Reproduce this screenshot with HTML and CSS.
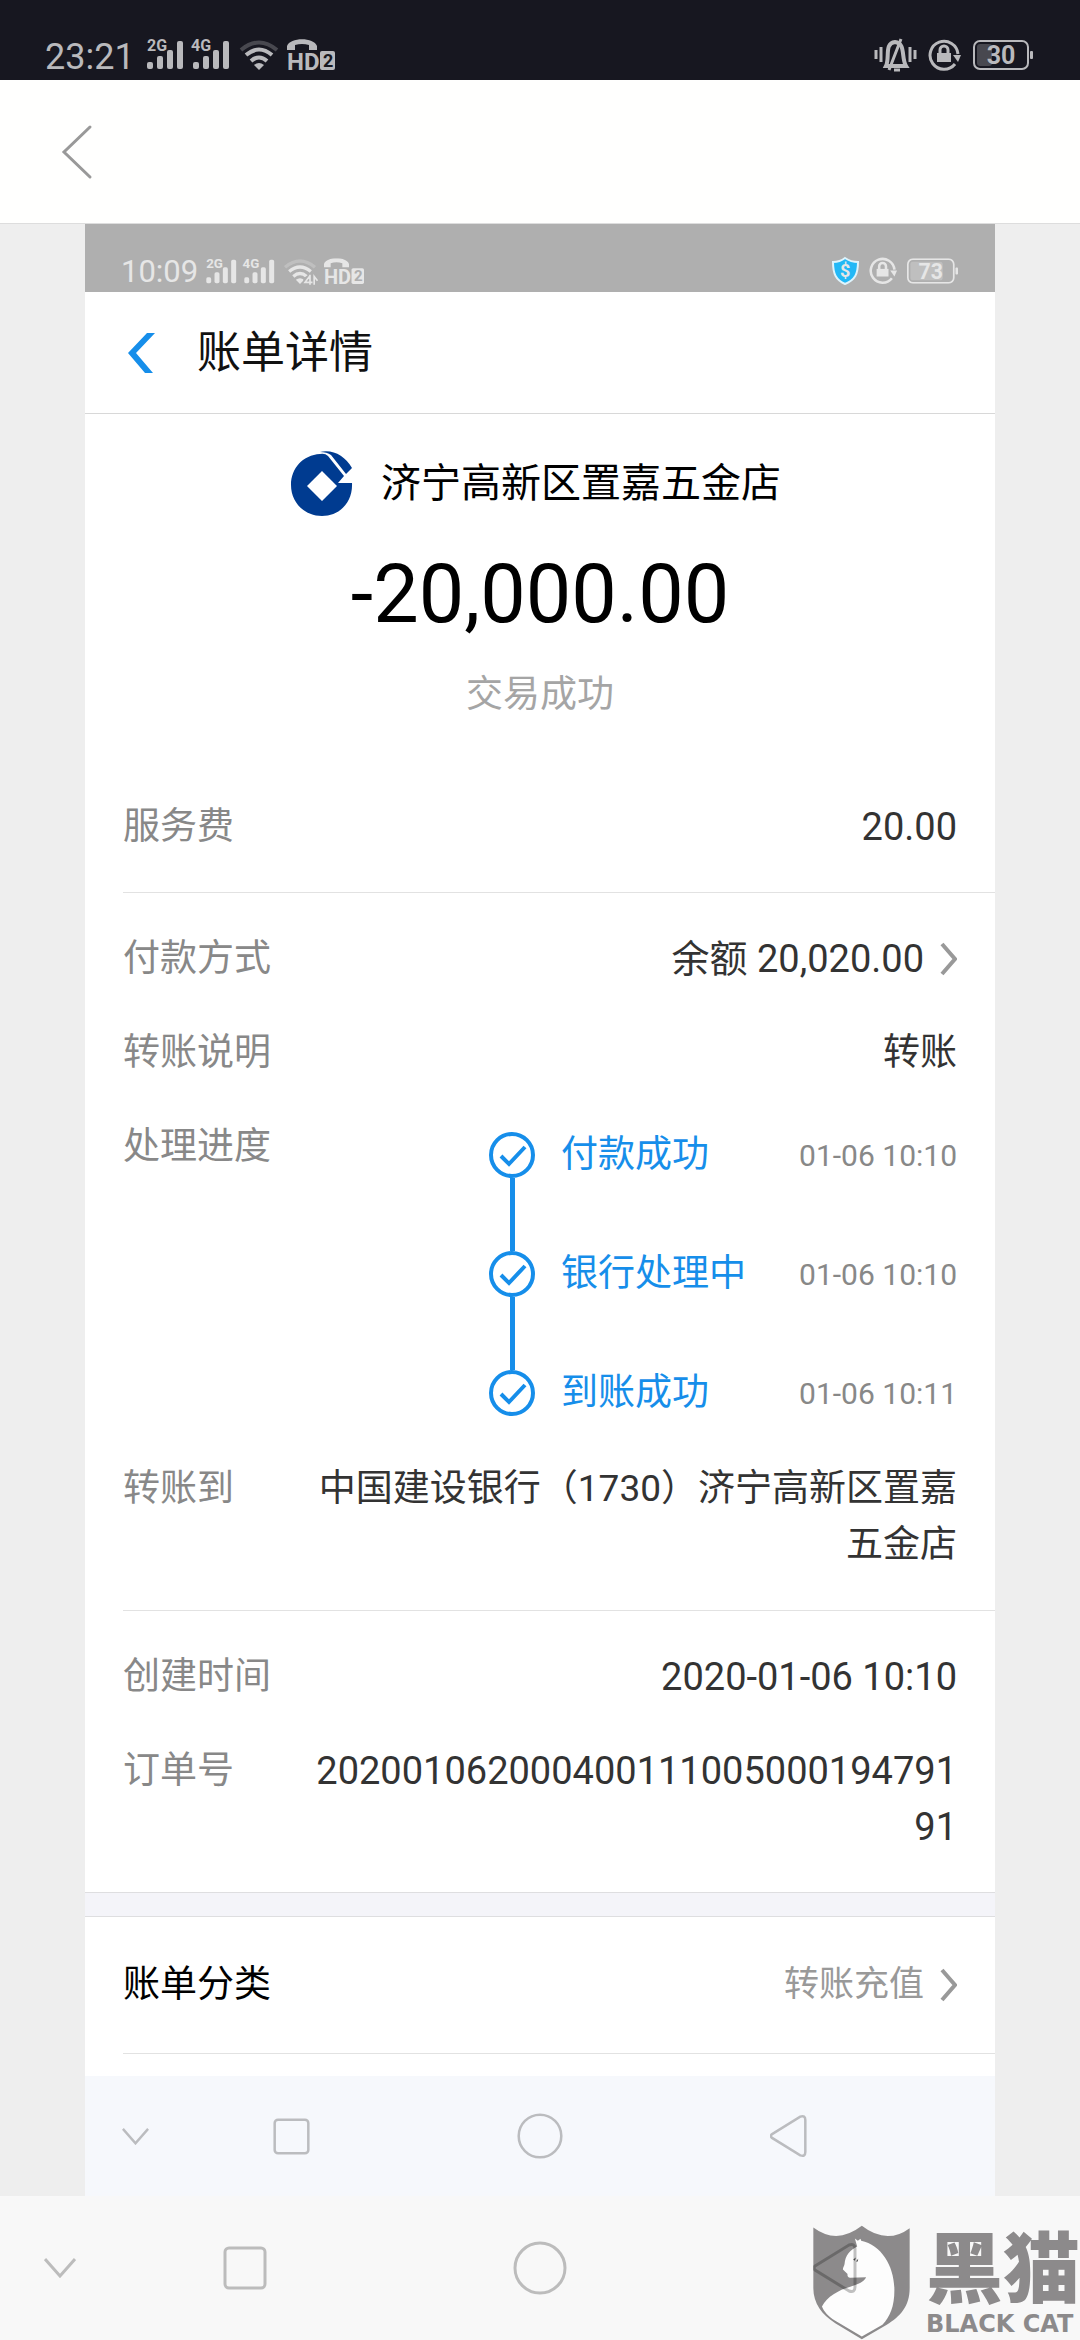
FILE: index.html
```html
<!DOCTYPE html>
<html lang="zh-CN">
<head>
    <meta charset="utf-8">
    <meta name="viewport" content="width=device-width">
    <title>账单详情</title>
    <link rel="stylesheet" href="styles.css">
</head>

<body>

    <!-- 公用图标 -->
    <svg class="sprite" aria-hidden="true">
        <symbol id="bars" viewBox="0 0 38 30">
            <rect x="0" y="22" width="6" height="7" rx="2"/>
            <rect x="10" y="16" width="6" height="13" rx="2"/>
            <rect x="20" y="10" width="6" height="19" rx="2"/>
            <rect x="30" y="1" width="6" height="28" rx="2"/>
        </symbol>
        <symbol id="wifi" viewBox="0 0 40 30">
            <g fill="none" stroke="currentColor" stroke-width="4">
                <path d="M2 10Q20 -5 38 10" opacity=".3"/>
                <path d="M7 15Q20 4 33 15"/>
                <path d="M12 21Q20 14 28 21"/>
            </g>
            <path d="M15 25Q20 21 25 25L20 30Z"/>
        </symbol>
        <symbol id="hd" viewBox="0 0 48 32">
            <path d="M0 11V7C3 -2 27 -2 30 7V11H22V6Q15 4 8 6V11Z"/>
            <rect x="33" y="12" width="15" height="19" rx="2"/>
        </symbol>
        <symbol id="lock" viewBox="0 0 33 33">
            <g fill="none" stroke="currentColor">
                <path stroke-width="3" d="M30 15A14 14 0 1 0 27 25"/>
                <path stroke-width="3" d="M12 15V11a4 4 0 0 1 8 0v4"/>
            </g>
            <rect x="9" y="14" width="14" height="9"/>
            <path d="M25 16H33L30 23Z"/>
        </symbol>
        <symbol id="battery" viewBox="0 0 60 30">
            <rect x="1" y="1" width="54" height="28" rx="6" fill="none" stroke="currentColor" stroke-width="2"/>
            <rect x="57" y="11" width="3" height="8" rx="1"/>
        </symbol>
        <symbol id="more" viewBox="0 0 17 34">
            <path d="M2 2L15 17L2 32" fill="none" stroke="currentColor" stroke-width="4"/>
        </symbol>
        <symbol id="check" viewBox="0 0 46 46">
            <g fill="none" stroke="currentColor" stroke-width="4">
                <circle cx="23" cy="23" r="21"/>
                <path d="M12 24L20 32L36 15"/>
            </g>
        </symbol>
        <symbol id="nav-down" viewBox="0 0 32 20">
            <path d="M1 1L16 18L31 1" fill="none" stroke="currentColor" stroke-width="3"/>
        </symbol>
        <symbol id="nav-square" viewBox="0 0 44 44">
            <rect x="2" y="2" width="40" height="40" rx="4" fill="none" stroke="currentColor" stroke-width="3"/>
        </symbol>
        <symbol id="nav-circle" viewBox="0 0 54 54">
            <circle cx="27" cy="27" r="25" fill="none" stroke="currentColor" stroke-width="3"/>
        </symbol>
        <symbol id="nav-back" viewBox="0 0 44 52">
            <path d="M2 24L36 3Q42 1 42 7V45Q42 51 36 49L2 28Q0 26 2 24Z" fill="none" stroke="currentColor" stroke-width="3"/>
        </symbol>
    </svg>

    <div class="status-bar">
        <span class="clock">23:21</span>
        <svg class="signal" viewBox="0 0 38 30"><use href="#bars"/><text class="net" x="0" y="11">2G</text></svg>
        <svg class="signal" viewBox="0 0 38 30"><use href="#bars"/><text class="net" x="-2" y="11">4G</text></svg>
        <svg class="wifi"><use href="#wifi"/></svg>
        <svg class="hd" viewBox="0 0 48 32"><use href="#hd"/><text class="hd-text" x="0" y="31">HD</text><text class="hd-num dark" x="36" y="28">2</text></svg>
        <span class="spacer"></span>
        <svg class="bell" viewBox="0 0 41 34">
            <path d="M11 28C15 20 9 5 20 4C31 5 26 20 31 28Z" fill="none" stroke="currentColor" stroke-width="4"/>
            <path d="M26 1L14 32M19 32h6M1 12v9M6 9v15M35 9v15M40 12v9" fill="none" stroke="currentColor" stroke-width="3"/>
        </svg>
        <svg class="lock"><use href="#lock"/></svg>
        <svg class="battery" viewBox="0 0 60 30"><rect class="charge" x="4" y="4" width="15" height="22" rx="3"/><use href="#battery"/><text class="battery-text" x="28" y="24">30</text></svg>
    </div>

    <header class="viewer-bar">
        <button class="viewer-back" aria-label="返回">
            <svg viewBox="0 0 30 54"><path d="M28 2L2 27L28 52" fill="none" stroke="currentColor" stroke-width="3" stroke-linecap="round"/></svg>
        </button>
    </header>

    <main class="bill">
        <div class="status-bar small">
            <span class="clock">10:09</span>
            <svg class="signal" viewBox="0 0 38 30"><use href="#bars"/><text class="net" x="0" y="11">2G</text></svg>
            <svg class="signal" viewBox="0 0 38 30"><use href="#bars"/><text class="net" x="-2" y="11">4G</text></svg>
            <svg class="wifi" viewBox="0 0 40 30"><use href="#wifi"/><path class="wifi-gap" d="M24 30V23L33 17H40V30Z"/><path d="M32 19V31M32 20L26 28H35M37 31V21L41 26" fill="none" stroke="currentColor" stroke-width="2"/></svg>
            <svg class="hd" viewBox="0 0 48 32"><use href="#hd"/><text class="hd-text" x="0" y="31">HD</text><text class="hd-num" x="36" y="28">2</text></svg>
            <span class="spacer"></span>
            <svg class="shield" viewBox="0 0 27 28">
                <path d="M13 1Q19 5 26 5C26 17 23 23 13 27C4 23 1 17 1 5Q8 5 13 1Z" fill="#22b8f6" stroke="#dff4fc" stroke-width="2"/>
                <text x="8" y="20">$</text>
            </svg>
            <svg class="lock"><use href="#lock"/></svg>
            <svg class="battery" viewBox="0 0 60 30"><rect class="charge" x="4" y="4" width="38" height="22" rx="3"/><use href="#battery"/><text class="battery-text" x="28" y="24">73</text></svg>
        </div>

        <div class="title-bar">
            <button class="title-back" aria-label="返回">
                <svg viewBox="0 0 27 40"><path d="M19 0H27L8 20L25 40H17L0 20Z" fill="currentColor"/></svg>
            </button>
            <h1>账单详情</h1>
        </div>

        <section class="summary">
            <div class="merchant">
                <svg class="bank-logo" viewBox="0 0 62 65">
                    <path d="M29 3Q34 2 37 5L53 25L47 32H61C62 52 48 65 31 65C13 65 0 51 0 34C0 17 12 4 29 3ZM31 20L16 35L31 50L46 35Z" fill="#003b90" fill-rule="evenodd"/>
                    <path d="M29 1C42 -2 54 5 61 17L55 23L40 4Q36 1 29 1Z" fill="#003b90"/>
                </svg>
                <span>济宁高新区置嘉五金店</span>
            </div>
            <div class="amount">-20,000.00</div>
            <div class="state">交易成功</div>
        </section>

        <dl class="group fee">
            <div class="row"><dt>服务费</dt><dd class="number">20.00</dd></div>
        </dl>

        <dl class="group">
            <div class="row">
                <dt>付款方式</dt>
                <dd class="number"><button class="link">余额 20,020.00<svg class="more"><use href="#more"/></svg></button></dd>
            </div>
            <div class="row"><dt>转账说明</dt><dd>转账</dd></div>
            <div class="row">
                <dt>处理进度</dt>
                <dd>
                    <ol class="steps">
                        <li>
                            <div class="mark"><svg><use href="#check"/></svg><i></i></div>
                            <span>付款成功</span><time>01-06 10:10</time>
                        </li>
                        <li>
                            <div class="mark"><svg><use href="#check"/></svg><i></i></div>
                            <span>银行处理中</span><time>01-06 10:10</time>
                        </li>
                        <li>
                            <div class="mark"><svg><use href="#check"/></svg></div>
                            <span>到账成功</span><time>01-06 10:11</time>
                        </li>
                    </ol>
                </dd>
            </div>
            <div class="row"><dt>转账到</dt><dd>中国建设银行（1730）济宁高新区置嘉五金店</dd></div>
        </dl>

        <dl class="group last">
            <div class="row"><dt>创建时间</dt><dd class="number">2020-01-06 10:10</dd></div>
            <div class="row"><dt>订单号</dt><dd class="number">20200106200040011100500019479191</dd></div>
        </dl>

        <div class="band"></div>

        <div class="category">
            <span>账单分类</span>
            <button class="link">转账充值<svg class="more"><use href="#more"/></svg></button>
        </div>

        <nav class="nav-bar small">
            <button class="down" aria-label="收起"><svg viewBox="0 0 32 20"><use href="#nav-down"/></svg></button>
            <button class="square" aria-label="最近任务"><svg viewBox="0 0 44 44"><use href="#nav-square"/></svg></button>
            <button class="circle" aria-label="主页"><svg viewBox="0 0 54 54"><use href="#nav-circle"/></svg></button>
            <button class="back" aria-label="返回"><svg viewBox="0 0 44 52"><use href="#nav-back"/></svg></button>
        </nav>
    </main>

    <footer class="bottom">
        <div class="watermark">
            <svg viewBox="93 105 292 345">
                <path d="M94 112Q165 165 240 107Q315 165 384 114V295C384 350 355 380 315 405L240 448L160 400C120 375 94 340 94 295Z" fill="#8c8a8b"/>
                <path d="M219 145L228 152L236 146L238 152C300 165 338 230 338 300C338 350 325 380 302 405L240 440L160 393C140 380 125 365 120 350C135 320 170 300 205 290C230 283 247 275 253 262L205 263C198 262 196 258 197 252L183 238C183 232 187 228 188 222C190 195 205 180 226 169Z" fill="#fdfdfd"/>
                <path d="M214 208L222 202L219 212ZM222 214L229 206L228 214Z" fill="#555"/>
            </svg>
            <div class="brand">
                <b>黑猫</b>
                <span>BLACK CAT</span>
            </div>
        </div>
        <nav class="nav-bar">
            <button class="down" aria-label="收起"><svg viewBox="0 0 32 20"><use href="#nav-down"/></svg></button>
            <button class="square" aria-label="最近任务"><svg viewBox="0 0 44 44"><use href="#nav-square"/></svg></button>
            <button class="circle" aria-label="主页"><svg viewBox="0 0 54 54"><use href="#nav-circle"/></svg></button>
            <button class="back" aria-label="返回"><svg viewBox="0 0 44 52"><use href="#nav-back"/></svg></button>
        </nav>
    </footer>

</body>
</html>
```
FILE: styles.css
```css
* {
    box-sizing: border-box;
}

body {
    margin: 0;
    min-height: 100vh;
    display: flex;
    flex-direction: column;
    background-color: #eee;
    color: #333;
    font-family: Roboto, "Noto Sans CJK SC", sans-serif;
    font-size: 37px;
    line-height: 56px;
}

button {
    padding: 0;
    border: none;
    background: none;
    color: inherit;
    font: inherit;
    cursor: pointer;
}

svg {
    display: block;
    fill: currentColor;
    overflow: visible;
}

.sprite {
    position: absolute;
    width: 0;
    height: 0;
}

/* 状态栏 */
.status-bar {
    display: flex;
    align-items: center;
    gap: 8px;
    height: 80px;
    padding: 30px 47px 0 45px;
    background-color: #171720;
    color: #b9b9bc;
}

.clock {
    margin-right: 4px;
    padding-top: 4px;
    font-size: 36px;
    line-height: 46px;
}

.signal {
    width: 38px;
    height: 30px;
}

.net {
    font-size: 16px;
    font-weight: bold;
}

.wifi {
    width: 40px;
    height: 30px;
}

.hd {
    width: 48px;
    height: 32px;
}

.hd-text {
    font-size: 24px;
    font-weight: bold;
}

.hd-num {
    fill: #afafaf;
    font-size: 18px;
    font-weight: bold;
}

.hd-num.dark {
    fill: #171720;
}

.spacer {
    flex: 1;
}

.bell {
    width: 41px;
    height: 34px;
    margin-right: 4px;
}

.lock {
    width: 33px;
    height: 33px;
    margin-right: 4px;
}

.battery {
    width: 60px;
    height: 30px;
}

.charge {
    opacity: 0.3;
}

.battery-text {
    font-size: 25px;
    font-weight: bold;
    text-anchor: middle;
}

.status-bar.small {
    gap: 6px;
    height: 68px;
    padding: 26px 37px 0 36px;
    background-color: #afafaf;
    color: #e6e6e6;
}

.small .clock {
    margin-right: 2px;
    padding-top: 2px;
    font-size: 31px;
    line-height: 40px;
}

.small .signal {
    width: 32px;
    height: 25px;
}

.small .wifi {
    width: 36px;
    height: 25px;
}

.small .hd {
    width: 40px;
    height: 27px;
}

.wifi-gap {
    fill: #afafaf;
}

.shield {
    width: 27px;
    height: 28px;
    margin-right: 4px;
    font-size: 18px;
    font-weight: bold;
}

.small .lock {
    width: 28px;
    height: 28px;
}

.small .battery {
    width: 51px;
    height: 26px;
}

/* 外层返回栏 */
.viewer-bar {
    display: flex;
    align-items: center;
    height: 144px;
    padding: 0 62px;
    border-bottom: 1px solid #ddd;
    background-color: #fffffe;
    color: #999;
}

.viewer-back svg {
    width: 30px;
    height: 54px;
}

/* 账单 */
.bill {
    flex: 1;
    display: flex;
    flex-direction: column;
    margin: 0 85px;
    background-color: #fff;
}

.title-bar {
    display: flex;
    align-items: center;
    gap: 42px;
    height: 122px;
    padding: 0 43px;
    border-bottom: 1px solid #d8d8d8;
}

.title-back {
    color: #168eea;
}

.title-back svg {
    width: 27px;
    height: 40px;
}

h1 {
    margin: 0;
    color: #111;
    font-size: 44px;
    font-weight: normal;
}

.summary {
    padding: 37px 38px 0;
    text-align: center;
}

.merchant {
    display: flex;
    justify-content: center;
    align-items: center;
    gap: 28px;
    padding-right: 8px;
    color: #000;
    font-size: 40px;
}

.bank-logo {
    width: 62px;
    height: 65px;
}

.amount {
    margin: 31px 0 24px;
    color: #000;
    font-size: 81px;
    line-height: 96px;
}

.state {
    color: #a5a5a5;
}

.group {
    display: flex;
    flex-direction: column;
    gap: 38px;
    margin: 0 0 0 38px;
    padding: 38px 38px 37px 0;
    border-bottom: 1px solid #e2e2e2;
}

.group.fee {
    padding-top: 76px;
}

.group.last {
    border-bottom: none;
}

.row {
    display: flex;
    justify-content: space-between;
    gap: 38px;
}

dt {
    flex: none;
    color: #888;
}

dd {
    max-width: 644px;
    margin: 0;
    text-align: right;
    overflow-wrap: anywhere;
}

.number {
    font-size: 38px;
}

.link {
    display: flex;
    align-items: center;
    gap: 16px;
}

.more {
    width: 17px;
    height: 34px;
    color: #999;
}

.steps {
    width: 468px;
    margin: 0;
    padding: 13px 0 6px;
    list-style: none;
    color: #168eea;
    line-height: 46px;
    text-align: left;
}

.steps li {
    display: grid;
    grid-template-columns: 46px 1fr auto;
    column-gap: 26px;
}

.mark {
    display: flex;
    flex-direction: column;
    align-items: center;
}

.mark svg {
    width: 46px;
    height: 46px;
}

.mark i {
    width: 5px;
    height: 73px;
    background-color: #168eea;
}

time {
    padding-top: 1px;
    color: #888;
    font-size: 30px;
}

.band {
    height: 25px;
    border-top: 1px solid #dedee0;
    border-bottom: 1px solid #dedee0;
    background-color: #f4f4f9;
}

.category {
    display: flex;
    justify-content: space-between;
    align-items: center;
    height: 137px;
    margin: 0 0 22px 38px;
    padding-right: 38px;
    border-bottom: 1px solid #e2e2e2;
    color: #000;
}

.category .link {
    color: #999;
    font-size: 35px;
}

/* 导航键 */
.bottom {
    position: relative;
    background-color: #f8f8f8;
}

.nav-bar {
    position: relative;
    display: grid;
    grid-template-columns: 1fr 3fr 3fr 3fr 1fr;
    place-items: center;
    height: 144px;
    color: rgba(0, 0, 0, 0.24);
}

.nav-bar .down {
    justify-self: end;
    margin-right: 22px;
}

.down svg {
    width: 32px;
    height: 20px;
}

.square svg {
    width: 44px;
    height: 44px;
}

.circle svg {
    width: 54px;
    height: 54px;
}

.back svg {
    width: 44px;
    height: 52px;
}

.nav-bar.small {
    flex: 1;
    min-height: 120px;
    background-color: #f6f8fc;
}

.small .down {
    margin-right: 19px;
}

.small .down svg {
    width: 27px;
    height: 17px;
}

.small .square svg {
    width: 37px;
    height: 37px;
}

.small .circle svg {
    width: 46px;
    height: 46px;
}

.small .back svg {
    width: 37px;
    height: 44px;
}

/* 右下角水印 */
.watermark {
    position: absolute;
    right: 0;
    bottom: 0;
    display: flex;
    gap: 16px;
    color: #8c8a8b;
}

.watermark svg {
    width: 97px;
    height: 115px;
}

.brand {
    display: flex;
    flex-direction: column;
    justify-content: space-between;
}

.brand b {
    font-family: "Noto Sans CJK SC", sans-serif;
    font-size: 77px;
    font-weight: 900;
    line-height: 78px;
}

.brand span {
    font-family: "DejaVu Sans", sans-serif;
    font-size: 24px;
    font-weight: bold;
    line-height: 32px;
}
```
